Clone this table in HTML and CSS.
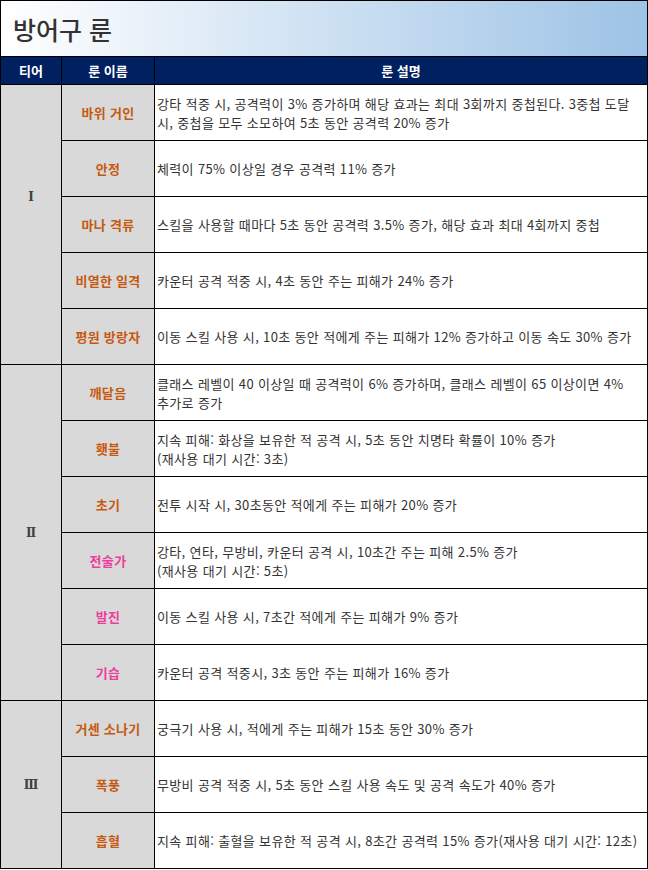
FILE: index.html
```html
<!DOCTYPE html>
<html lang="ko">
<head>
<meta charset="utf-8">
<title>방어구 룬</title>
<link rel="stylesheet" href="styles.css">
</head>
<body>
<div class="sheet">
  <div class="title">방어구 룬</div>
  <div class="head">티어</div>
  <div class="head">룬 이름</div>
  <div class="head">룬 설명</div>

  <div class="tier tier-1">Ⅰ</div>
  <div class="name">바위 거인</div>
  <div class="desc">강타 적중 시, 공격력이 3% 증가하며 해당 효과는 최대 3회까지 중첩된다. 3중첩 도달<br>시, 중첩을 모두 소모하여 5초 동안 공격력 20% 증가</div>
  <div class="name">안정</div>
  <div class="desc">체력이 75% 이상일 경우 공격력 11% 증가</div>
  <div class="name">마나 격류</div>
  <div class="desc">스킬을 사용할 때마다 5초 동안 공격력 3.5% 증가, 해당 효과 최대 4회까지 중첩</div>
  <div class="name">비열한 일격</div>
  <div class="desc">카운터 공격 적중 시, 4초 동안 주는 피해가 24% 증가</div>
  <div class="name">평원 방랑자</div>
  <div class="desc">이동 스킬 사용 시, 10초 동안 적에게 주는 피해가 12% 증가하고 이동 속도 30% 증가</div>

  <div class="tier tier-2">Ⅱ</div>
  <div class="name">깨달음</div>
  <div class="desc">클래스 레벨이 40 이상일 때 공격력이 6% 증가하며, 클래스 레벨이 65 이상이면 4%<br>추가로 증가</div>
  <div class="name">횃불</div>
  <div class="desc">지속 피해: 화상을 보유한 적 공격 시, 5초 동안 치명타 확률이 10% 증가<br>(재사용 대기 시간: 3초)</div>
  <div class="name">초기</div>
  <div class="desc">전투 시작 시, 30초동안 적에게 주는 피해가 20% 증가</div>
  <div class="name pink">전술가</div>
  <div class="desc">강타, 연타, 무방비, 카운터 공격 시, 10초간 주는 피해 2.5% 증가<br>(재사용 대기 시간: 5초)</div>
  <div class="name pink">발진</div>
  <div class="desc">이동 스킬 사용 시, 7초간 적에게 주는 피해가 9% 증가</div>
  <div class="name pink">기습</div>
  <div class="desc">카운터 공격 적중시, 3초 동안 주는 피해가 16% 증가</div>

  <div class="tier tier-3">Ⅲ</div>
  <div class="name">거센 소나기</div>
  <div class="desc">궁극기 사용 시, 적에게 주는 피해가 15초 동안 30% 증가</div>
  <div class="name">폭풍</div>
  <div class="desc">무방비 공격 적중 시, 5초 동안 스킬 사용 속도 및 공격 속도가 40% 증가</div>
  <div class="name">흡혈</div>
  <div class="desc">지속 피해: 출혈을 보유한 적 공격 시, 8초간 공격력 15% 증가(재사용 대기 시간: 12초)</div>
</div>
</body>
</html>
```

FILE: styles.css
```css
html, body {
  margin: 0;
  padding: 0;
  background: #ffffff;
}

body {
  font-family: "Noto Sans CJK KR", "Noto Sans", sans-serif;
  font-size: 13px;
  color: #333333;
}

.sheet {
  width: 648px;
  box-sizing: border-box;
  display: grid;
  grid-template-columns: 60px 92px 492px;
  grid-template-rows: 55px 27px repeat(14, 55px);
  gap: 1px;
  padding: 1px;
  background: #000000;
}

.title {
  grid-column: 1 / 4;
  display: flex;
  align-items: center;
  padding-left: 12px;
  font-size: 25px;
  font-weight: 500;
  color: #333333;
  background: linear-gradient(to right, #ffffff 0%, #9dc3e6 100%);
}

.head {
  display: flex;
  align-items: center;
  justify-content: center;
  background: #002060;
  color: #ffffff;
  font-weight: bold;
  font-size: 13px;
}

.tier {
  display: flex;
  align-items: center;
  justify-content: center;
  background: #d9d9d9;
  color: #404040;
  font-family: "DejaVu Serif", "Liberation Serif", serif;
  font-weight: bold;
  font-size: 12px;
}

.tier-1 {
  grid-row: span 5;
  padding-bottom: 56px;
}

.tier-2 {
  grid-row: span 6;
}

.tier-3 {
  grid-row: span 3;
}

.name {
  display: flex;
  align-items: center;
  justify-content: center;
  background: #d9d9d9;
  color: #c65911;
  font-weight: bold;
  text-align: center;
  letter-spacing: 0.3px;
}

.name.pink {
  color: #ee3d9b;
}

.desc {
  display: flex;
  align-items: center;
  background: #ffffff;
  padding-left: 2px;
  line-height: 19px;
  letter-spacing: 0.35px;
  white-space: nowrap;
  overflow: hidden;
}
```
